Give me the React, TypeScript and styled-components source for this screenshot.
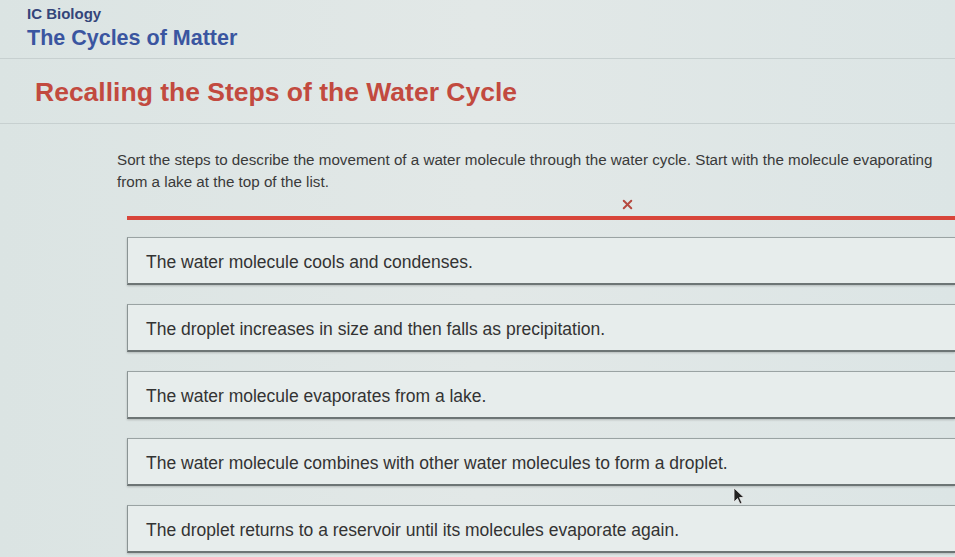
import styled, { createGlobalStyle } from 'styled-components';
import { X } from 'lucide-react';

const GlobalStyle = createGlobalStyle`
    html, body {
        margin: 0;
        padding: 0;
        background: #dde5e4;
    }
    body {
        font-family: "Liberation Sans", Arial, sans-serif;
    }
`

const steps = [
    'The water molecule cools and condenses.',
    'The droplet increases in size and then falls as precipitation.',
    'The water molecule evaporates from a lake.',
    'The water molecule combines with other water molecules to form a droplet.',
    'The droplet returns to a reservoir until its molecules evaporate again.',
];

const App = () => {
    return (
        <Page>
            <GlobalStyle />
            <Header>
                <CourseName>IC Biology</CourseName>
                <UnitName>The Cycles of Matter</UnitName>
            </Header>
            <Divider />
            <TitleBar>
                <LessonTitle>Recalling the Steps of the Water Cycle</LessonTitle>
            </TitleBar>
            <Divider />
            <Content>
                <Instructions>
                    Sort the steps to describe the movement of a water molecule through the water cycle. Start with the molecule evaporating from a lake at the top of the list.
                </Instructions>
                <SortArea>
                    <FeedbackRow>
                        <X size={15} strokeWidth={3.2} color="#b5483f" />
                    </FeedbackRow>
                    <RedBar />
                    <StepList>
                        {steps.map((step) => (
                            <StepCard key={step}>{step}</StepCard>
                        ))}
                    </StepList>
                </SortArea>
            </Content>
            <Pointer viewBox="0 0 12 18" width="12" height="18">
                <path d="M1 1 L1 15 L4.5 11.5 L7 17 L9 16 L6.5 10.5 L11 10.5 Z" fill="#222" stroke="#eee" strokeWidth="0.8" />
            </Pointer>
        </Page>
    )
}

const Page = styled.div`
    position: relative;
    width: 955px;
    height: 557px;
    overflow: hidden;
    background: linear-gradient(90deg, #dbe4e3 0%, #e2e8e7 50%, #dce5e5 100%);
`

const Header = styled.div`
    display: flex;
    flex-direction: column;
    gap: 4px;
    padding: 5px 0 7px 27px;
`

const CourseName = styled.div`
    font-size: 15px;
    line-height: 17px;
    font-weight: bold;
    color: #34457a;
`

const UnitName = styled.div`
    font-size: 21.5px;
    line-height: 25px;
    font-weight: bold;
    color: #3a55a0;
`

const Divider = styled.div`
    height: 1px;
    background: #c7d0d0;
`

const TitleBar = styled.div`
    padding: 18px 0 15px 35px;
`

const LessonTitle = styled.h1`
    margin: 0;
    font-size: 26.5px;
    line-height: 31px;
    font-weight: bold;
    color: #c24a3f;
`

const Content = styled.div`
    padding: 25px 0 0 117px;
`

const Instructions = styled.p`
    margin: 0;
    padding-right: 12px;
    font-size: 15.2px;
    line-height: 22px;
    color: #3a3a3a;
`

const SortArea = styled.div`
    margin-left: 10px;
`

const FeedbackRow = styled.div`
    display: flex;
    padding: 4px 0 4px 493px;
`

const RedBar = styled.div`
    height: 4px;
    background: #d8453a;
    margin-bottom: 17px;
`

const StepList = styled.div`
    display: flex;
    flex-direction: column;
    gap: 19px;
`

const StepCard = styled.div`
    display: flex;
    align-items: center;
    box-sizing: border-box;
    height: 48px;
    padding: 3px 0 0 18px;
    background: #e7edec;
    border-top: 1px solid #9aa3a3;
    border-left: 1px solid #8a9494;
    border-bottom: 2px solid #6d7575;
    box-shadow: 0 1px 2px rgba(0, 0, 0, 0.2);
    font-size: 17.5px;
    color: #333;
`

const Pointer = styled.svg`
    position: absolute;
    left: 733px;
    top: 487px;
`

export default App;
